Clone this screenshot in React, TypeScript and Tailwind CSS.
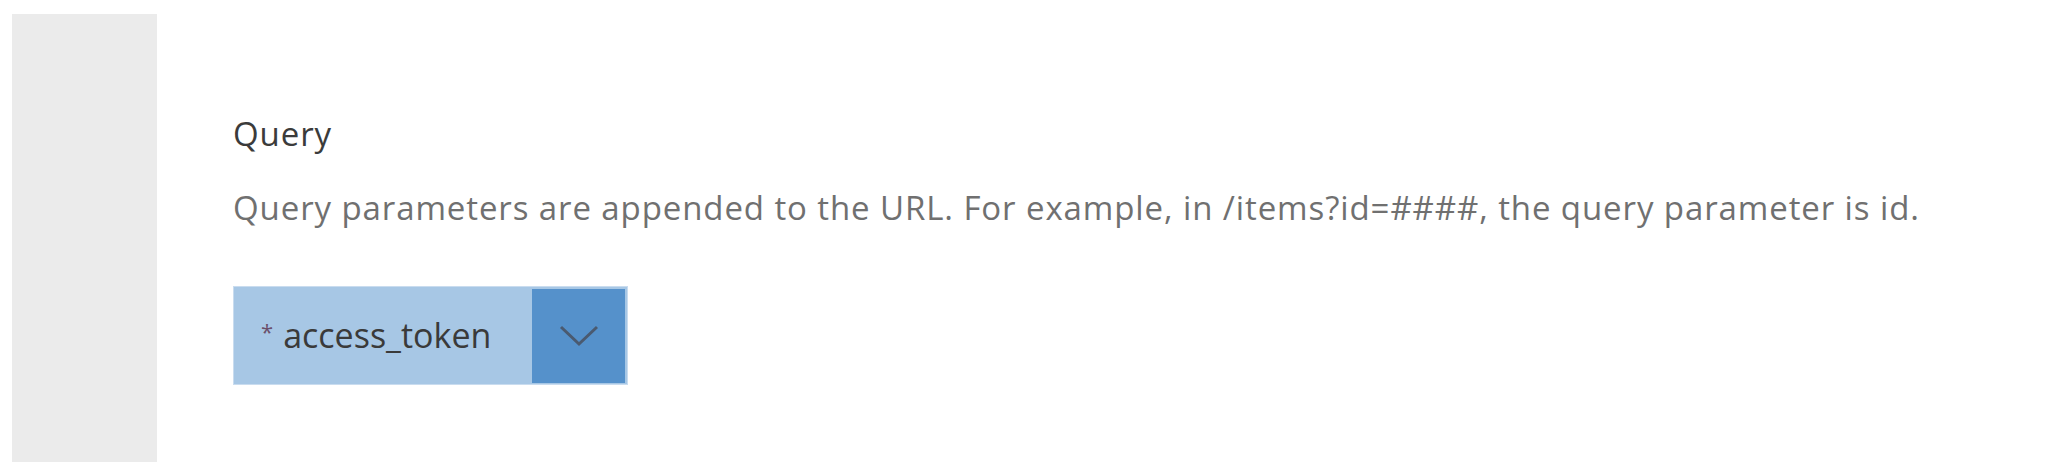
import React from "react";

const font = { fontFamily: '"Open Sans", "Noto Sans", sans-serif' };

export default function App() {
  return (
    <div className="flex h-[467px] w-[2048px] bg-white pl-[12px] pt-[14px]" style={font}>
      <div className="h-[448px] w-[145px] shrink-0 bg-[#ebebeb]" />
      <div className="flex flex-col pl-[76px] pt-[100px]">
        <div className="text-[33px] leading-[40px] tracking-[0.9px] text-[#3b3b3b]">Query</div>
        <div className="mt-[34px] whitespace-nowrap text-[33px] leading-[40px] tracking-[0.9px] text-[#707070]">
          Query parameters are appended to the URL. For example, in /items?id=####, the query parameter is id.
        </div>
        <div className="mt-[58px] flex h-[99px] w-[395px] items-center justify-between border border-[#c9dcef] bg-[#a7c7e5] pl-[27px] pr-[2px]">
          <span className="whitespace-nowrap text-[34px] text-[#3a3a3a]">
            <span className="mr-[10px] text-[22px] align-[8px] text-[#6b4f6b]">*</span>
            access_token
          </span>
          <div className="flex h-[94px] w-[93px] items-center justify-center bg-[#5591cb]">
            <svg width="40" height="22" viewBox="0 0 40 22" fill="none">
              <path d="M2 2 L20 19 L38 2" stroke="#4a5a70" strokeWidth="3" />
            </svg>
          </div>
        </div>
      </div>
    </div>
  );
}
